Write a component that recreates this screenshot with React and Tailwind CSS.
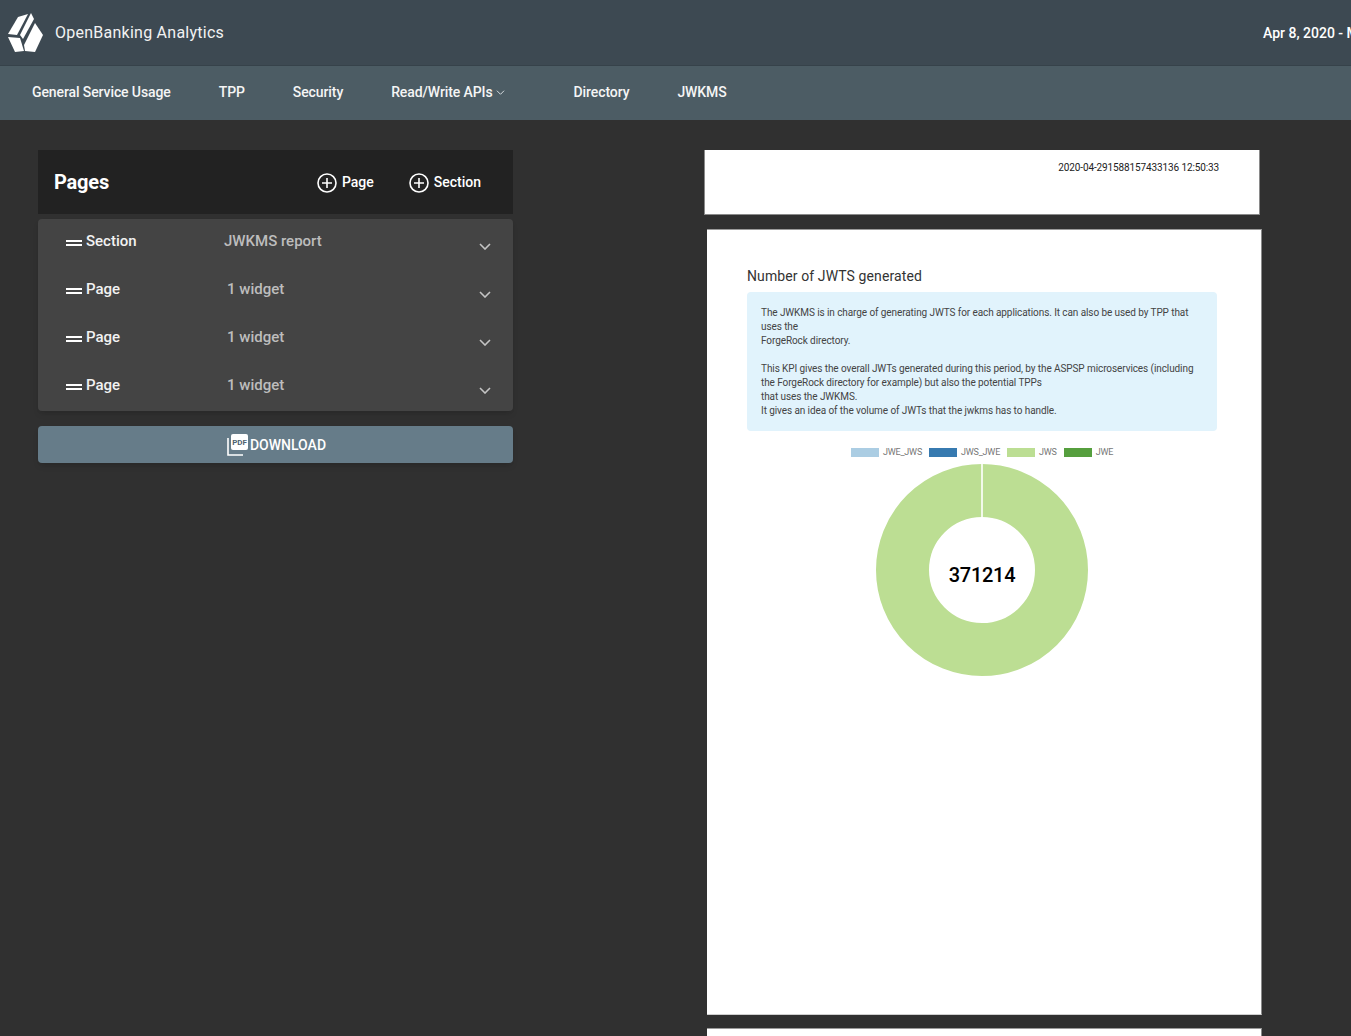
import React from "react";

function Logo() {
  return (
    <svg width="36" height="40" viewBox="0 0 36 40" className="shrink-0" fill="#fff">
      <polygon points="10,4 20,1 9,22 0,21" />
      <polygon points="23,0 26,6 15,26 12,22" />
      <polygon points="27,10 35,22 27,39 17,38 16,32" />
      <polygon points="0,24 12,25 16,38 7,39" />
    </svg>
  );
}

function Plus() {
  return (
    <svg width="20" height="20" viewBox="0 0 20 20" fill="none" stroke="#fff" strokeWidth="1.6">
      <circle cx="10" cy="10" r="9" />
      <path d="M10 5v10M5 10h10" />
    </svg>
  );
}

function Chevron({ w = 12, h = 7, stroke = "#c4c4c4", sw = 1.6 }) {
  return (
    <svg width={w} height={h} viewBox="0 0 12 7" fill="none" stroke={stroke} strokeWidth={sw}>
      <path d="M1 1l5 5 5-5" />
    </svg>
  );
}

function Pdf() {
  return (
    <svg width="21" height="22" viewBox="0 0 21 22" className="shrink-0">
      <path d="M1 4v17h15" fill="none" stroke="#fff" strokeWidth="1.6" />
      <rect x="4" y="0" width="17" height="16" rx="2" fill="#fff" />
      <text x="12.5" y="11" textAnchor="middle" fontSize="8" fontWeight="700" fontFamily="Roboto, sans-serif" fill="#4f6370">PDF</text>
    </svg>
  );
}

function Row({ label, value, valueClass }) {
  return (
    <div className="flex items-center h-12 pl-7 pr-[22px] pb-1">
      <span className="flex flex-col gap-[2px] w-4 mr-1 mt-1 shrink-0">
        <span className="block h-[2px] bg-white" />
        <span className="block h-[2px] bg-white" />
      </span>
      <span className="text-[15px] font-medium text-[#f2f2f2] w-[138px] shrink-0">{label}</span>
      <span className={`text-[15px] font-medium text-[#bdbdbd] ${valueClass}`}>{value}</span>
      <span className="ml-auto mt-[11px] flex"><Chevron /></span>
    </div>
  );
}

function Legend({ color, label, className }) {
  return (
    <div className={`flex items-center gap-1 ${className}`}>
      <span className={`block w-7 h-[9px] ${color}`} />
      <span className="text-[9px] text-[#777] leading-none tracking-[-0.2px]">{label}</span>
    </div>
  );
}

export default function App() {
  return (
    <div className="h-[1036px] overflow-hidden bg-[#303030] font-['Roboto',sans-serif]">
      <header className="h-[66px] flex items-center bg-[#3d4952] border-b border-[#36424a] overflow-hidden">
        <div className="ml-2 mr-[11px] flex"><Logo /></div>
        <span className="text-base text-[#f2f2f2] tracking-[0.25px] w-[208px] shrink-0 whitespace-nowrap">OpenBanking Analytics</span>
        <span className="pl-[1000px] shrink-0 whitespace-nowrap text-sm font-medium text-white">Apr 8, 2020 - May 8, 2020</span>
      </header>

      <nav className="h-[54px] flex items-center bg-[#4c5c64] pl-8 pb-[2px] text-sm font-medium text-[#f5f5f5] tracking-[-0.1px]">
        <span>General Service Usage</span>
        <span className="ml-12">TPP</span>
        <span className="ml-12">Security</span>
        <span className="ml-12 flex items-center gap-[3px]">Read/Write APIs <Chevron w={9} h={5} stroke="#dfe4e6" sw={1.3} /></span>
        <span className="ml-[69px]">Directory</span>
        <span className="ml-12">JWKMS</span>
      </nav>

      <main className="flex items-start pt-[30px]">
        <section className="w-[475px] ml-[38px] shrink-0">
          <div className="h-16 bg-[#222] flex items-center pl-4 pr-8">
            <span className="text-xl font-bold text-white tracking-[-0.2px]">Pages</span>
            <span className="ml-auto flex items-center gap-[5px] text-sm font-medium text-white"><span className="flex ml-[1px] mt-[1px]"><Plus /></span>Page</span>
            <span className="ml-[34px] flex items-center gap-[5px] text-sm font-medium text-white"><span className="flex ml-[1px] mt-[1px]"><Plus /></span>Section</span>
          </div>
          <div className="mt-[5px] bg-[#444] rounded shadow-md">
            <Row label="Section" value="JWKMS report" valueClass="" />
            <Row label="Page" value="1 widget" valueClass="ml-[3px]" />
            <Row label="Page" value="1 widget" valueClass="ml-[3px]" />
            <Row label="Page" value="1 widget" valueClass="ml-[3px]" />
          </div>
          <button className="mt-[15px] w-full h-[37px] pl-[2px] rounded bg-[#667c89] flex items-center justify-center gap-[2px] text-sm font-medium text-white shadow-md">
            <Pdf />
            DOWNLOAD
          </button>
        </section>

        <section className="ml-[192px] w-[556px] shrink-0">
          <div className="-ml-px w-[556px] h-[65px] bg-white border-x border-b border-[#8a8a8a] pr-10 pt-[11px] text-right text-[10px] leading-[14px] text-[#222] tracking-[-0.12px]">
            2020-04-291588157433136 12:50:33
          </div>
          <div className="mt-[14px] ml-[2px] w-[555px] h-[786px] bg-white border-t border-r border-b border-t-[#9a9a9a] border-r-[#8a8a8a] border-b-[#cfcfcf] pl-10 pr-10 pt-[36px]">
            <h2 className="text-sm leading-[20px] text-[#333] tracking-[0.1px]">Number of JWTS generated</h2>
            <div className="mt-[6px] w-[470px] h-[139px] rounded-sm bg-[#e1f3fc] px-[14px] pt-[14px] text-[10px] leading-[14px] text-[#444] tracking-[-0.09px]">
              The JWKMS is in charge of generating JWTS for each applications. It can also be used by TPP that uses the<br />
              ForgeRock directory.<br /><br />
              This KPI gives the overall JWTs generated during this period, by the ASPSP microservices (including the ForgeRock directory for example) but also the potential TPPs<br />
              that uses the JWKMS.<br />
              It gives an idea of the volume of JWTs that the jwkms has to handle.
            </div>
            <div className="mt-[17px] h-[9px] flex items-center pl-[104px]">
              <Legend color="bg-[#abcde3]" label="JWE_JWS" className="mr-[7px]" />
              <Legend color="bg-[#377ab0]" label="JWS_JWE" className="mr-[7px]" />
              <Legend color="bg-[#bcde93]" label="JWS" className="mr-[7px]" />
              <Legend color="bg-[#569f3e]" label="JWE" />
            </div>
            <div className="relative mt-[7px] ml-[129px] w-[212px] h-[212px]">
              <svg width="212" height="212" viewBox="0 0 212 212">
                <circle cx="106" cy="106" r="79.5" fill="none" stroke="#bcde93" strokeWidth="53" />
                <rect x="105.2" y="0" width="1.6" height="53" fill="#fff" />
              </svg>
              <span className="absolute inset-x-0 top-[99px] text-center text-xl leading-6 font-medium text-black tracking-[-0.3px]">371214</span>
            </div>
          </div>
          <div className="mt-[13px] ml-[2px] w-[555px] h-[40px] bg-white border-t border-r border-t-[#9a9a9a] border-r-[#8a8a8a]" />
        </section>
      </main>
    </div>
  );
}
